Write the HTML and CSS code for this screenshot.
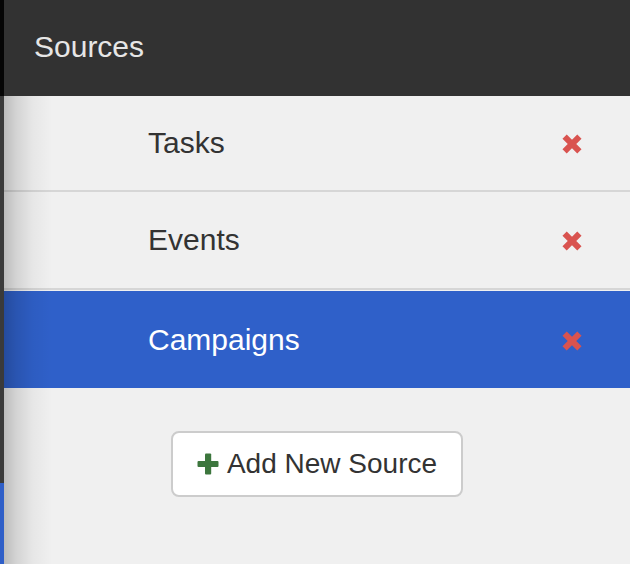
FILE: index.html
```html
<!DOCTYPE html>
<html>
<head>
<meta charset="utf-8">
<link rel="stylesheet" href="styles.css">
</head>
<body>
<div class="page">
  <div class="edge">
    <div class="edge-top"></div>
    <div class="edge-mid"></div>
    <div class="edge-bottom"></div>
  </div>
  <div class="panel">
    <div class="panel-header">Sources</div>
    <div class="panel-body">
      <ul class="source-list">
        <li class="source-row">
          <span class="source-name">Tasks</span>
          <svg class="remove-icon" viewBox="0 0 20 20" aria-hidden="true"><path d="M2.6 2.6 L17.4 17.4 M17.4 2.6 L2.6 17.4"/></svg>
        </li>
        <li class="source-row is-tall">
          <span class="source-name">Events</span>
          <svg class="remove-icon" viewBox="0 0 20 20" aria-hidden="true"><path d="M2.6 2.6 L17.4 17.4 M17.4 2.6 L2.6 17.4"/></svg>
        </li>
        <li class="source-row is-active">
          <span class="source-name">Campaigns</span>
          <svg class="remove-icon" viewBox="0 0 20 20" aria-hidden="true"><path d="M2.6 2.6 L17.4 17.4 M17.4 2.6 L2.6 17.4"/></svg>
        </li>
      </ul>
      <div class="actions">
        <button class="add-button" type="button">
          <svg class="plus-icon" viewBox="0 0 22 22" aria-hidden="true"><rect x="8" y="0.5" width="6.2" height="21" rx="1"/><rect x="0.5" y="7.9" width="21" height="6.2" rx="1"/></svg>
          <span>Add New Source</span>
        </button>
      </div>
      <div class="panel-shadow"></div>
    </div>
  </div>
</div>
</body>
</html>
```

FILE: styles.css
```css
html, body {
  margin: 0;
  padding: 0;
  height: 100%;
}

body {
  font-family: "Liberation Sans", Arial, Helvetica, sans-serif;
  background: #f0f0f0;
  overflow: hidden;
}

.page {
  display: flex;
  height: 564px;
}

.edge {
  width: 4px;
  display: flex;
  flex-direction: column;
  flex-shrink: 0;
}

.edge-top {
  height: 96px;
  background: #050505;
}

.edge-mid {
  height: 387px;
  background: #3a3a3a;
}

.edge-bottom {
  flex: 1;
  background: #2f5fc8;
}

.panel {
  flex: 1;
  display: flex;
  flex-direction: column;
  background: #f0f0f0;
}

.panel-header {
  height: 96px;
  box-sizing: border-box;
  background: #323232;
  color: #e6e6e6;
  font-size: 30px;
  display: flex;
  align-items: center;
  padding-left: 30px;
  padding-bottom: 2px;
}

.panel-body {
  position: relative;
  flex: 1;
}

.source-list {
  list-style: none;
  margin: 0;
  padding: 0;
}

.source-row {
  height: 96px;
  box-sizing: border-box;
  display: flex;
  align-items: center;
  justify-content: space-between;
  padding: 0 48px 0 144px;
  border-bottom: 2px solid #d6d6d6;
  color: #333333;
  font-size: 30px;
}

.source-row.is-tall {
  height: 98px;
}

.source-row.is-active {
  background: #2f60c9;
  color: #ffffff;
  border-bottom: none;
  height: 97px;
  margin-top: 1px;
}

.remove-icon {
  width: 20px;
  height: 20px;
  flex-shrink: 0;
  margin-top: 2px;
}

.remove-icon path {
  stroke: #d9534f;
  stroke-width: 6;
  stroke-linecap: butt;
  fill: none;
}

.actions {
  display: flex;
  justify-content: center;
  padding-top: 43px;
}

.add-button {
  width: 292px;
  height: 66px;
  box-sizing: border-box;
  background: #ffffff;
  border: 2px solid #cccccc;
  border-radius: 8px;
  font-family: inherit;
  font-size: 28px;
  color: #333333;
  display: flex;
  align-items: center;
  justify-content: center;
  gap: 8px;
  margin: 0;
  padding: 0 0 1px 0;
}

.plus-icon {
  width: 22px;
  height: 22px;
  fill: #3c763d;
  flex-shrink: 0;
}

.panel-shadow {
  position: absolute;
  left: 0;
  top: 0;
  bottom: 0;
  width: 48px;
  pointer-events: none;
  background: linear-gradient(to right, rgba(0,0,0,0.22) 0%, rgba(0,0,0,0.12) 25%, rgba(0,0,0,0.04) 60%, rgba(0,0,0,0) 100%);
}
```
